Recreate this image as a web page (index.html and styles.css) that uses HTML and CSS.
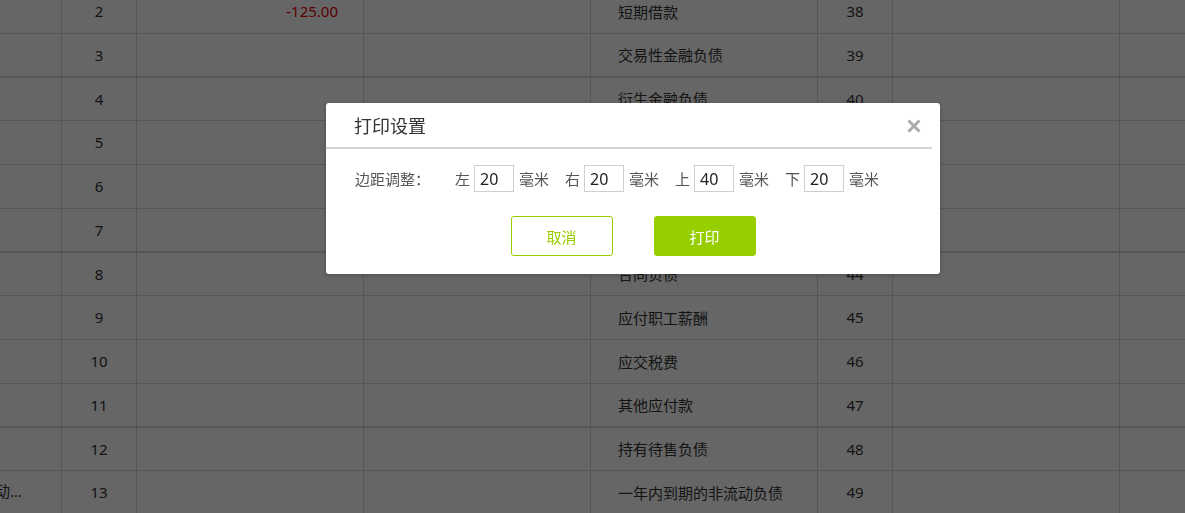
FILE: index.html
```html
<!DOCTYPE html>
<html lang="zh-CN">
<head>
<meta charset="utf-8">
<title>打印设置</title>
<link rel="stylesheet" href="styles.css">
</head>
<body>
<div class="sheet">
  <div class="row h44"><div class="c c0"></div><div class="c cn">2</div><div class="c ca red">-125.00</div><div class="c ca"></div><div class="c ct">短期借款</div><div class="c cn">38</div><div class="c ca"></div><div class="c ca"></div></div>
  <div class="row h44 thick"><div class="c c0"></div><div class="c cn">3</div><div class="c ca"></div><div class="c ca"></div><div class="c ct">交易性金融负债</div><div class="c cn">39</div><div class="c ca"></div><div class="c ca"></div></div>
  <div class="row h43"><div class="c c0"></div><div class="c cn">4</div><div class="c ca"></div><div class="c ca"></div><div class="c ct">衍生金融负债</div><div class="c cn">40</div><div class="c ca"></div><div class="c ca"></div></div>
  <div class="row h44"><div class="c c0"></div><div class="c cn">5</div><div class="c ca"></div><div class="c ca"></div><div class="c ct">应付票据</div><div class="c cn">41</div><div class="c ca"></div><div class="c ca"></div></div>
  <div class="row h44"><div class="c c0"></div><div class="c cn">6</div><div class="c ca"></div><div class="c ca"></div><div class="c ct">应付账款</div><div class="c cn">42</div><div class="c ca"></div><div class="c ca"></div></div>
  <div class="row h44 thick"><div class="c c0"></div><div class="c cn">7</div><div class="c ca"></div><div class="c ca"></div><div class="c ct">预收款项</div><div class="c cn">43</div><div class="c ca"></div><div class="c ca"></div></div>
  <div class="row h43"><div class="c c0"></div><div class="c cn">8</div><div class="c ca"></div><div class="c ca"></div><div class="c ct">合同负债</div><div class="c cn">44</div><div class="c ca"></div><div class="c ca"></div></div>
  <div class="row h44"><div class="c c0"></div><div class="c cn">9</div><div class="c ca"></div><div class="c ca"></div><div class="c ct">应付职工薪酬</div><div class="c cn">45</div><div class="c ca"></div><div class="c ca"></div></div>
  <div class="row h44"><div class="c c0"></div><div class="c cn">10</div><div class="c ca"></div><div class="c ca"></div><div class="c ct">应交税费</div><div class="c cn">46</div><div class="c ca"></div><div class="c ca"></div></div>
  <div class="row h44 thick"><div class="c c0"></div><div class="c cn">11</div><div class="c ca"></div><div class="c ca"></div><div class="c ct">其他应付款</div><div class="c cn">47</div><div class="c ca"></div><div class="c ca"></div></div>
  <div class="row h43"><div class="c c0"></div><div class="c cn">12</div><div class="c ca"></div><div class="c ca"></div><div class="c ct">持有待售负债</div><div class="c cn">48</div><div class="c ca"></div><div class="c ca"></div></div>
  <div class="row h44"><div class="c c0">一年内到期的非流动资产</div><div class="c cn">13</div><div class="c ca"></div><div class="c ca"></div><div class="c ct">一年内到期的非流动负债</div><div class="c cn">49</div><div class="c ca"></div><div class="c ca"></div></div>
</div>

<div class="shade"></div>

<div class="dialog">
  <div class="dlg-head">
    <span class="dlg-title">打印设置</span>
    <svg class="dlg-close" width="14" height="14" viewBox="0 0 14 14" aria-hidden="true"><path d="M1.5 1.5 L12.5 12.5 M12.5 1.5 L1.5 12.5" stroke="#ababab" stroke-width="3" stroke-linecap="butt" fill="none"/></svg>
  </div>
  <div class="dlg-body">
    <div class="margins">
      <span class="m-label">边距调整：</span>
      <div class="m-group"><span>左</span><input class="m-input" value="20"><span>毫米</span></div>
      <div class="m-group"><span>右</span><input class="m-input" value="20"><span>毫米</span></div>
      <div class="m-group"><span>上</span><input class="m-input" value="40"><span>毫米</span></div>
      <div class="m-group"><span>下</span><input class="m-input" value="20"><span>毫米</span></div>
    </div>
    <div class="actions">
      <button class="btn btn-line">取消</button>
      <button class="btn btn-fill">打印</button>
    </div>
  </div>
</div>
</body>
</html>
```

FILE: styles.css
```css
html, body {
  margin: 0;
  padding: 0;
  overflow: hidden;
  background: #fff;
  font-family: "Noto Sans", "Noto Sans CJK SC", sans-serif;
}

.sheet {
  margin-top: -10px;
  margin-left: -152px;
  width: 1600px;
  color: #333;
  font-size: 15px;
}

.row {
  display: grid;
  grid-template-columns: 214px 75px 227px 227px 227px 75px 227px 227px;
  box-sizing: border-box;
  border-bottom: 1px solid #d6d6d6;
}
.row.h44 { height: 44px; }
.row.h43 { height: 43px; }
.row.thick { border-bottom-width: 2px; }

.c {
  box-sizing: border-box;
  border-right: 1px solid #d6d6d6;
  display: flex;
  align-items: center;
  padding-bottom: 1px;
  white-space: nowrap;
  overflow: hidden;
}
.c0 {
  display: block;
  line-height: 41px;
  padding: 0 27px;
  text-overflow: ellipsis;
}
.cn { justify-content: center; }
.ca { justify-content: flex-end; padding-right: 25px; }
.ct { padding-left: 27px; }
.red { color: #e80000; }

.shade {
  position: fixed;
  inset: 0;
  background: rgba(0, 0, 0, 0.6);
}

.dialog {
  position: absolute;
  left: 326px;
  top: 103px;
  width: 614px;
  height: 171px;
  background: #fff;
  border-radius: 3px;
  box-shadow: 0 1px 4px rgba(0, 0, 0, 0.25);
  color: #555;
}

.dlg-head {
  position: relative;
  height: 44px;
  margin-right: 8px;
  border-bottom: 2px solid #d5d5d5;
  display: flex;
  align-items: center;
  padding-left: 28px;
}
.dlg-title {
  font-size: 18px;
  color: #333;
}
.dlg-close {
  position: absolute;
  right: 11px;
  top: 16px;
}

.dlg-body {
  padding: 16px 0 18px 29px;
}

.margins {
  display: flex;
  align-items: center;
  height: 27px;
  font-size: 15px;
  color: #555;
}
.m-label {
  width: 100px;
}
.m-group {
  display: flex;
  align-items: center;
  margin-right: 16px;
}
.m-input {
  box-sizing: border-box;
  width: 40px;
  height: 27px;
  margin: 0 5px 0 4px;
  padding: 0 0 0 5px;
  border: 1px solid #cfcfcf;
  border-radius: 0;
  font-family: "Noto Sans", sans-serif;
  font-size: 16px;
  color: #222;
  outline: none;
}

.actions {
  display: flex;
  justify-content: center;
  gap: 41px;
  margin-top: 24px;
  padding-right: 29px;
}
.btn {
  box-sizing: border-box;
  width: 102px;
  height: 40px;
  border-radius: 3px;
  font-family: "Noto Sans CJK SC", sans-serif;
  font-size: 15px;
  cursor: pointer;
}
.btn-line {
  background: #fff;
  border: 1px solid #99cc00;
  color: #99cc00;
}
.btn-fill {
  background: #97ce00;
  border: 1px solid #97ce00;
  color: #fff;
}
```
